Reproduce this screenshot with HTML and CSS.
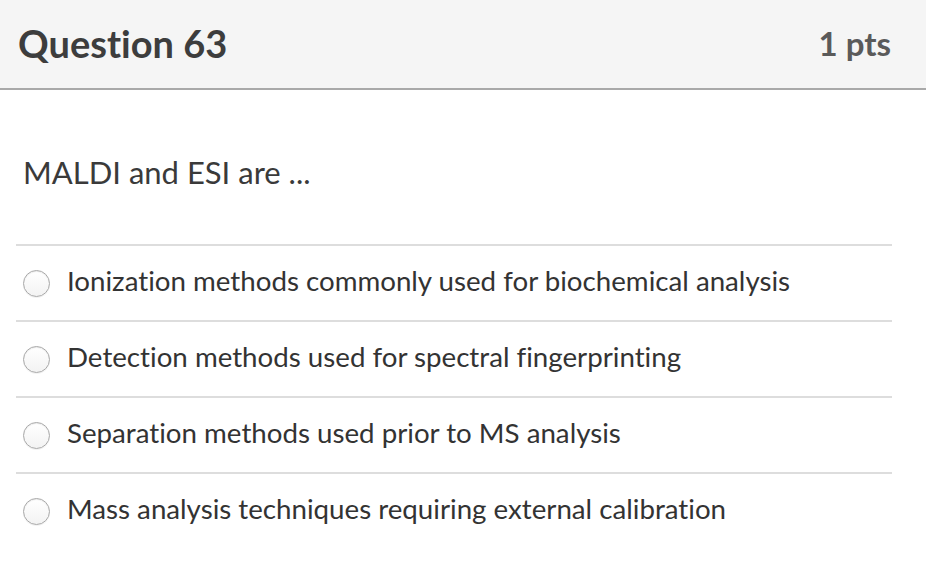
FILE: index.html
```html
<!DOCTYPE html>
<html>
<head>
<meta charset="utf-8">
<link rel="stylesheet" href="styles.css">
</head>
<body>
<div class="header">
  <div class="title">Question 63</div>
  <div class="pts">1 pts</div>
</div>
<div class="content">
  <div class="question">MALDI and ESI are ...</div>
  <div class="answers">
    <div class="answer"><span class="radio"></span><span class="label">Ionization methods commonly used for biochemical analysis</span></div>
    <div class="answer"><span class="radio"></span><span class="label">Detection methods used for spectral fingerprinting</span></div>
    <div class="answer"><span class="radio"></span><span class="label">Separation methods used prior to MS analysis</span></div>
    <div class="answer"><span class="radio"></span><span class="label">Mass analysis techniques requiring external calibration</span></div>
  </div>
</div>
</body>
</html>
```
FILE: styles.css
```css
html, body {
  margin: 0;
  padding: 0;
  background: #ffffff;
  font-family: Lato, "Open Sans", sans-serif;
  color: #333333;
  font-variant-ligatures: none;
}
.header {
  height: 88px;
  background: #f5f5f5;
  border-bottom: 2px solid #a9a9a9;
  display: flex;
  align-items: center;
  justify-content: space-between;
  padding: 0 35px 0 18px;
}
.title {
  font-size: 38px;
  font-weight: 700;
  color: #3d3d3d;
  padding-bottom: 2px;
}
.pts {
  font-size: 33px;
  font-weight: 700;
  color: #5a5a5a;
  padding-bottom: 2px;
}
.content {
  margin: 0 34px 0 16px;
}
.question {
  font-size: 31px;
  color: #3a3a3a;
  padding: 65px 0 0 7px;
  line-height: 34px;
  margin-bottom: 55px;
}
.answers {
  border-top: 2px solid #dddddd;
}
.answer {
  display: flex;
  align-items: center;
  height: 74px;
  border-bottom: 2px solid #dddddd;
}
.answer:last-child {
  border-bottom: none;
}
.radio {
  width: 27px;
  height: 27px;
  border-radius: 50%;
  border: 1px solid #a8a8a8;
  background: linear-gradient(#ffffff, #f3f3f3);
  box-shadow: inset 0 1px 1px rgba(0,0,0,0.08), 0 1px 0 rgba(0,0,0,0.05);
  margin-left: 7px;
  margin-right: 17px;
  box-sizing: border-box;
  flex-shrink: 0;
}
.label {
  font-size: 27.7px;
  color: #333333;
  padding-bottom: 6px;
}
```
